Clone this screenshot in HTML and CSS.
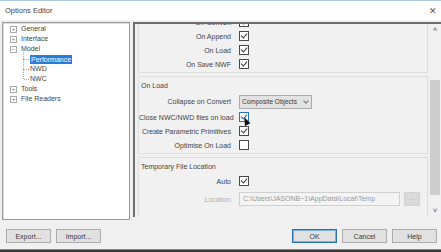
FILE: index.html
```html
<!DOCTYPE html>
<html lang="en">
<head>
  <meta charset="UTF-8" />
  <title>Options Editor</title>
  <link rel="stylesheet" href="styles.css">
</head>
<body>
  <div class="window">
    <div class="titlebar">
      <span class="title">Options Editor</span>
      <span class="close">&#x2715;</span>
    </div>

    <div class="main">
      <!-- option tree -->
      <div class="tree">
        <div class="node"><span class="exp">+</span>General</div>
        <div class="node"><span class="exp">+</span>Interface</div>
        <div class="node"><span class="exp">&minus;</span>Model</div>
        <div class="node child"><span class="sel">Performance</span></div>
        <div class="node child">NWD</div>
        <div class="node child last">NWC</div>
        <div class="node"><span class="exp">+</span>Tools</div>
        <div class="node"><span class="exp">+</span>File Readers</div>
      </div>

      <!-- settings pane -->
      <div class="pane">
        <div class="scroll">
          <div class="group first">
            <div class="row"><span class="lbl">On Convert</span><span class="chk on"></span></div>
            <div class="row"><span class="lbl">On Append</span><span class="chk on"></span></div>
            <div class="row"><span class="lbl">On Load</span><span class="chk on"></span></div>
            <div class="row"><span class="lbl">On Save NWF</span><span class="chk on"></span></div>
          </div>

          <div class="group middle">
            <div class="ghead">On Load</div>
            <div class="row tall"><span class="lbl">Collapse on Convert</span>
              <span class="select">Composite Objects<span class="caret"></span></span>
            </div>
            <div class="row"><span class="lbl">Close NWC/NWD files on load</span><span class="chk on hot"></span><span class="cursor"></span></div>
            <div class="row"><span class="lbl">Create Parametric Primitives</span><span class="chk on"></span></div>
            <div class="row"><span class="lbl">Optimise On Load</span><span class="chk"></span></div>
          </div>

          <div class="group last">
            <div class="ghead">Temporary File Location</div>
            <div class="row"><span class="lbl">Auto</span><span class="chk on"></span></div>
            <div class="row tall"><span class="lbl dim">Location</span>
              <span class="path">C:\Users\JASONB~1\AppData\Local\Temp</span>
              <span class="browse">...</span>
            </div>
          </div>
        </div>

        <div class="vscroll">
          <span class="arrow">&#x2C4;</span>
          <div class="track"><div class="thumb"></div></div>
          <span class="arrow">&#x2C5;</span>
        </div>
      </div>
    </div>

    <div class="footer">
      <div class="btns">
        <button>Export...</button>
        <button>Import...</button>
      </div>
      <div class="btns">
        <button class="default">OK</button>
        <button>Cancel</button>
        <button>Help</button>
      </div>
    </div>
    <div class="taskbar"></div>
  </div>
</body>
</html>
```

FILE: styles.css
```css
html, body {
  margin: 0;
  width: 441px;
  height: 252px;
  overflow: hidden;
}
body {
  font-family: "Liberation Sans", Arial, sans-serif;
  font-size: 7px;
  color: #3a3a3a;
  background: #f0f0f0;
}
.window {
  display: flex;
  flex-direction: column;
  height: 252px;
}
.titlebar {
  height: 19px;
  background: #fff;
  border-top: 1px solid #a9c6e2;
  display: flex;
  align-items: center;
  justify-content: space-between;
  padding: 0 4px 0 5px;
  font-size: 7.5px;
  color: #444;
}
.close {
  font-size: 9px;
  color: #555;
}
.main {
  display: flex;
  padding: 2px 0 0 2px;
  height: 198px;
}
.tree {
  width: 128px;
  height: 198px;
  background: #fff;
  border: 1px solid #999;
  box-shadow: inset 1px 1px 0 #ddd;
  padding-top: 1px;
  box-sizing: border-box;
}
.node {
  height: 10px;
  line-height: 10px;
  display: flex;
  align-items: center;
  padding-left: 7px;
  color: #444;
}
.exp {
  width: 5px;
  height: 5px;
  border: 1px solid #aaa;
  font-size: 6px;
  line-height: 5px;
  text-align: center;
  color: #777;
  margin-right: 4px;
}
.node.child {
  padding-left: 21px;
  position: relative;
}
.node.child::before {
  content: "";
  width: 5px;
  border-top: 1px dotted #aaa;
  margin-right: 1px;
}
.node.child::after {
  content: "";
  position: absolute;
  left: 20px;
  top: -5px;
  height: 10px;
  border-left: 1px dotted #aaa;
}
.sel {
  background: #2b7ad8;
  color: #fff;
  padding: 0 1px;
  line-height: 9px;
  outline: 1px dotted #fff;
}
.pane {
  flex: 1;
  margin-left: 3px;
  height: 193px;
  border-top: 2px solid #6e6e6e;
  border-left: 2px solid #6e6e6e;
  display: flex;
  overflow: hidden;
}
.scroll {
  flex: 1;
  padding: 0 1px 0 3px;
  margin-top: -13px;
}
.group {
  border: 1px solid #dedede;
  background: #f1f1f1;
  margin-bottom: 3px;
  padding: 3px 0 3px;
}
.group.first {
  padding-bottom: 1px;
}
.group.middle {
  padding-bottom: 1px;
}
.ghead {
  padding: 2px 0 4px 2px;
  color: #444;
}
.row {
  height: 14px;
  display: flex;
  align-items: center;
  position: relative;
}
.row.tall {
  height: 17px;
}
.lbl {
  width: 92px;
  text-align: right;
  margin-right: 8px;
  white-space: nowrap;
  color: #444;
}
.lbl.dim {
  color: #b0b0b0;
}
.chk {
  width: 8px;
  height: 8px;
  border: 1px solid #4a4a4a;
  background: #fff;
  position: relative;
}
.chk.on::after {
  content: "";
  position: absolute;
  left: 2px;
  top: 0;
  width: 3px;
  height: 5px;
  border-right: 1px solid #333;
  border-bottom: 1px solid #333;
  transform: rotate(40deg);
}
.chk.hot {
  border-color: #2a74c4;
}
.chk.hot::after {
  border-color: #1f5fa8;
}
.cursor {
  position: absolute;
  left: 104px;
  top: 7px;
  width: 0;
  height: 0;
  border-left: 3px solid transparent;
  border-right: 3px solid transparent;
  border-bottom: 8px solid #111;
  transform: rotate(-25deg);
}
.select {
  width: 66px;
  height: 12px;
  border: 1px solid #acacac;
  background: #e3e3e3;
  display: flex;
  align-items: center;
  justify-content: space-between;
  padding: 0 3px 0 2px;
  white-space: nowrap;
  font-size: 6.5px;
  color: #3a3a3a;
}
.caret {
  width: 3px;
  height: 3px;
  border-right: 1px solid #777;
  border-bottom: 1px solid #777;
  transform: rotate(45deg);
  margin-top: -2px;
}
.path {
  width: 156px;
  height: 12px;
  line-height: 12px;
  border: 1px solid #d0d0d0;
  background: #f4f4f4;
  color: #999;
  padding-left: 3px;
  white-space: nowrap;
}
.browse {
  width: 14px;
  height: 12px;
  margin-left: 4px;
  border: 1px solid #d3d3d3;
  background: #dadada;
  color: #aaa;
  text-align: center;
  line-height: 10px;
}
.group.last .row.tall {
  height: 22px;
}
.group.last {
  padding-bottom: 8px;
}
.vscroll {
  width: 12px;
  display: flex;
  flex-direction: column;
  align-items: center;
  background: #f0f0f0;
}
.arrow {
  height: 12px;
  line-height: 12px;
  font-size: 8px;
  color: #555;
}
.track {
  flex: 1;
  width: 100%;
  display: flex;
  flex-direction: column;
  padding-top: 44px;
  padding-bottom: 10px;
}
.thumb {
  flex: 1;
  margin: 0 1px;
  background: #cdcdcd;
}
.footer {
  display: flex;
  justify-content: space-between;
  padding: 9px 4px 0 6px;
  height: 20px;
}
.btns {
  display: flex;
  gap: 5px;
}
button {
  width: 45px;
  height: 14px;
  padding: 0;
  font-family: inherit;
  font-size: 7px;
  color: #3a3a3a;
  background: #e1e1e1;
  border: 1px solid #adadad;
}
button.default {
  border: 1px solid #2a6fb8;
  box-shadow: inset 0 0 0 1px #7fb0e0;
}
.taskbar {
  flex: 1;
  background: #3a3a3a;
  border-top: 1px solid #888;
}
```
